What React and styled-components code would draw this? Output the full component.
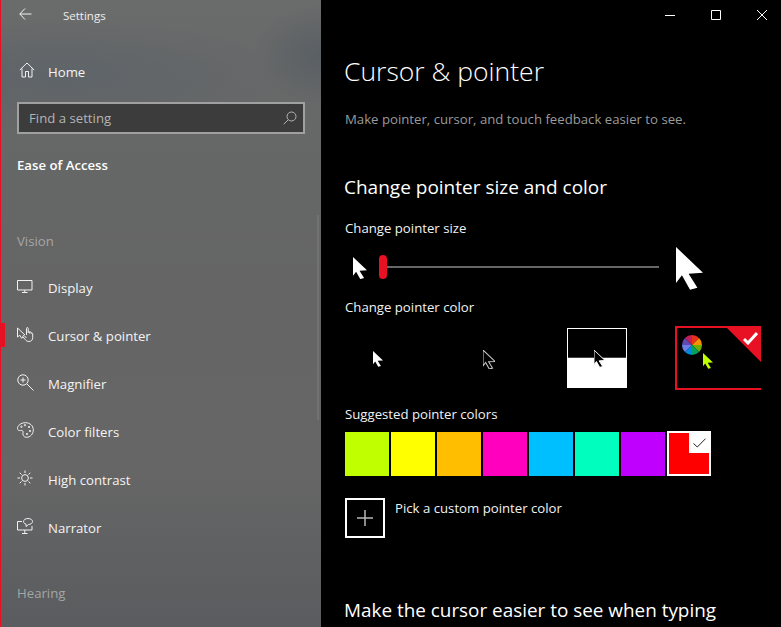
import React from "react";
import styled, { createGlobalStyle } from "styled-components";

const Global = createGlobalStyle`
  html, body { margin: 0; padding: 0; background: #000; }
  body { font-family: "Open Sans", "Noto Sans", "Liberation Sans", sans-serif; overflow: hidden; }
  * { box-sizing: border-box; }
`;

const Window = styled.div`
  width: 781px; height: 627px; display: flex; overflow: hidden; position: relative; background: #000;
`;
const Sidebar = styled.aside`
  width: 321px; height: 627px; flex: none; position: relative; overflow: hidden;
  border-left: 1px solid #e81123; color: #fff;
  background:
    radial-gradient(ellipse 70px 50px at 322px 55px, rgba(78,88,96,.6), rgba(78,88,96,0)),
    radial-gradient(ellipse 230px 55px at 60px 75px, rgba(86,96,104,.55), rgba(86,96,104,0)),
    linear-gradient(180deg, #6a6b6b 0, #666767 130px, #656565 300px, #666666 470px, #5a5c5f 627px);
`;
const Header = styled.div`
  height: 30px; display: flex; align-items: center; padding-left: 18px;
`;
const SettingsTitle = styled.span`
  font-size: 11.5px; margin-left: 31px; color: #eee;
`;
const NavRow = styled.div`
  height: 48px; display: flex; align-items: center; padding: 2px 0 0 ${p => p.$home ? 18 : 16}px; position: relative;
  font-size: 13.2px; color: #f4f4f4;
`;
const IconSlot = styled.span`
  width: ${p => p.$home ? 29 : 31}px; flex: none; display: flex; align-items: center; margin-top: -4px;
`;
const HomeWrap = styled.div`
  margin-top: 17px;
`;
const Search = styled.div`
  width: 288px; height: 32px; margin: 7px 0 0 16px; border: 2px solid #a0a0a0; background: #3c3c3c;
  display: flex; align-items: center; justify-content: space-between; padding: 0 6px 0 10px;
  font-size: 13.2px; color: #b4b4b4;
`;
const Section = styled.div`
  margin: ${p => p.$top}px 0 0 16px; font-size: 13.2px; line-height: 20px; height: 20px;
  color: ${p => p.$muted ? "#a5a5a5" : "#fff"}; font-weight: ${p => p.$bold ? 600 : 400};
`;
const NavList = styled.div`
  margin-top: 12px;
`;
const ActiveMark = styled.span`
  position: absolute; left: 0; top: 12px; width: 4px; height: 24px; background: #e81123;
`;
const Scroll = styled.span`
  position: absolute; left: 316px; top: 215px; width: 2px; height: 205px; background: #727272;
`;
const Main = styled.main`
  flex: 1; height: 627px; position: relative; color: #fff; overflow: hidden; padding-left: 23px;
`;
const Controls = styled.div`
  position: absolute; top: 0; right: -4px; display: flex;
`;
const Ctrl = styled.span`
  width: 46px; height: 30px; display: flex; align-items: center; justify-content: center;
`;
const Title = styled.h1`
  margin: 51px 0 0; font-size: 26.5px; line-height: 40px; font-weight: 300; height: 40px;
`;
const Desc = styled.p`
  margin: 18px 0 0 1px; font-size: 13.2px; line-height: 20px; color: #9a9a9a;
`;
const H2 = styled.h2`
  margin: ${p => p.$top}px 0 0; font-size: ${p => p.$size || 19}px; line-height: 28px; font-weight: 400;
`;
const Label = styled.div`
  margin: ${p => p.$top}px 0 0 1px; font-size: 13.2px; line-height: 20px; color: #f2f2f2;
`;
const SliderRow = styled.div`
  height: 44px; margin-top: 7px; display: flex; align-items: center; padding-left: 9px;
`;
const SmallCursor = styled.span`
  display: block; margin-top: 2px; width: 15px;
`;
const Thumb = styled.span`
  width: 8px; height: 24px; border-radius: 4px; background: #e81123; margin-left: 11px; flex: none;
`;
const Track = styled.span`
  width: 272px; height: 2px; background: #666; flex: none;
`;
const BigCursor = styled.span`
  margin: 4px 0 0 17px; display: block;
`;
const Cards = styled.div`
  width: 416px; height: 64px; margin: 9px 0 0 1px; display: flex; align-items: center; overflow: hidden;
`;
const PlainCard = styled.div`
  width: 60px; height: 60px; flex: none; margin-right: 51px; display: flex; align-items: flex-end; justify-content: center;
  padding: 0 0 ${p => p.$pb}px 6px;
`;
const SplitCard = styled.div`
  width: 60px; height: 60px; flex: none; margin-right: 48px; border: 1px solid #fff; border-bottom: 0;
  background: linear-gradient(180deg, #000 0, #000 28px, #444 28px, #444 29px, #fff 29px);
  display: flex; align-items: flex-end; justify-content: center; padding: 0 0 20px 4px;
`;
const CustomCard = styled.div`
  width: 90px; height: 64px; flex: none; border: 2px solid #e81123; position: relative;
`;
const Corner = styled.span`
  position: absolute; left: 48px; top: -2px; width: 38px; height: 38px; background: #e81123;
  clip-path: polygon(0 0, 100% 0, 100% 100%);
`;
const Wheel = styled.svg`
  position: absolute; left: 5px; top: 7px;
`;
const CursorSpot = styled.span`
  position: absolute; left: 26px; top: 25px;
`;
const CheckSpot = styled.span`
  position: absolute; left: 66px; top: 4px; display: flex;
`;
const Swatches = styled.div`
  display: flex; gap: 2px; margin: 7px 0 0 1px; align-items: flex-end;
`;
const Swatch = styled.span`
  width: 44px; height: 44px; background: ${p => p.$c};
`;
const PickedSwatch = styled.span`
  width: 44px; height: 45px; border: 2px solid #fff; background: #f00; position: relative;
`;
const PickedCorner = styled.span`
  position: absolute; right: 0; top: 0; width: 20px; height: 20px; background: #fff;
  display: flex; align-items: center; justify-content: center;
`;
const PickRow = styled.div`
  display: flex; gap: 10px; margin: 22px 0 0 1px;
`;
const PlusBox = styled.span`
  width: 40px; height: 40px; border: 2px solid #fff; display: flex; align-items: center; justify-content: center;
`;
const PickLabel = styled.span`
  font-size: 13.2px; line-height: 20px; color: #f2f2f2;
`;
const CursorSvg = styled.svg`
  flex: none; display: block;
`;
const BackArrow = styled.svg`
  margin-top: -2px;
`;

const stroke = { fill: "none", stroke: "#f2f2f2", strokeWidth: 1 };

const Cursor = ({ size = 12, fill = "#fff", line = "none" }) => (
  <CursorSvg width={size} height={size * 24 / 15} viewBox="0 0 15 24">
    <path d="M0 0 15 14.300 7 14.800 11.900 22.600 7.800 23.700 3.300 15.700 0 20Z" fill={fill} stroke={line} strokeWidth={line === "none" ? 0 : 1.3} />
  </CursorSvg>
);

const IconHome = () => (
  <svg width="16" height="16" viewBox="0 0 16 16" {...stroke}><path d="M.8 8 8 1l7.200 7M3 6.500V15h3.500V9.500h3V15H13V6.500" /></svg>
);
const IconDisplay = () => (
  <svg width="16" height="14" viewBox="0 0 16 14" {...stroke}><path d="M.5 1.500h14.500v9.500H.5ZM7.800 11v2.500M5 13.500h5.500" /></svg>
);
const IconCursorHand = () => (
  <svg width="17" height="15" viewBox="0 0 17 15" {...stroke}><path d="M.5 1v9l2.300-1.800 1.700 3 1.600-.9M.5 1 8 8" /><path d="M9.500 8V1.500c0-1.300 1.700-1.300 1.700 0V6m0-.8c0-1 1.500-1 1.500 0V6.500m0-.8c0-1 1.500-1 1.500 0v.8m0 0c0-.8 1.500-.8 1.500.4v3.600c0 2.500-1.500 4-3.800 4-1.700 0-2.900-.8-3.800-2.200L6 10c-.8-1 .5-2 1.400-1.200L9.500 11" /></svg>
);
const IconMagnifier = () => (
  <svg width="17" height="17" viewBox="0 0 17 17" {...stroke}><circle cx="6" cy="6" r="5.200" /><path d="M3.500 6h5M6 3.500v5M10 10l6.500 6.500" /></svg>
);
const IconPalette = () => (
  <svg width="17" height="16" viewBox="0 0 17 16" {...stroke}><path d="M8.500.7C4 .7.500 3.500.5 6.500c0 1.800 1.500 2.300 3 2 2-.4 3 .7 2.500 2.300-.5 1.800.5 4.500 3.500 4.500 4 0 6.800-3.500 6.800-7.500S13 .7 8.500.7Z" /><circle cx="4.500" cy="4.800" r=".7" /><circle cx="8" cy="3.200" r=".7" /><circle cx="12" cy="5" r=".7" /><circle cx="13" cy="9" r=".7" /><circle cx="10" cy="12" r=".7" /></svg>
);
const IconSun = () => (
  <svg width="16" height="16" viewBox="0 0 16 16" {...stroke}><circle cx="8" cy="8" r="3.400" /><path d="M8 .5v2.500M8 13v2.500M.5 8H3M13 8h2.500M2.700 2.700l1.800 1.800M11.500 11.500l1.800 1.800M2.700 13.300l1.800-1.800M11.500 4.500l1.800-1.800" /></svg>
);
const IconNarrator = () => (
  <svg width="16" height="16" viewBox="0 0 16 16" {...stroke}><path d="M5 3.500H.5v8.500h14.500V8M7.800 12v3M5 15.500h5.500" /><path d="M6.500 3.500C6.500 1.800 8.500.5 11 .5s4.500 1.300 4.500 3-2 3-4 3l-2.500 2V6.200C7.500 5.800 6.500 4.800 6.500 3.500Z" /></svg>
);

const NAV = [
  ["Display", <IconDisplay />],
  ["Cursor & pointer", <IconCursorHand />, true],
  ["Magnifier", <IconMagnifier />],
  ["Color filters", <IconPalette />],
  ["High contrast", <IconSun />],
  ["Narrator", <IconNarrator />],
];
const COLORS = ["#bfff00", "#ffff00", "#ffbf00", "#ff00bf", "#00bfff", "#00ffbf", "#bf00ff"];
const WHEEL = ["#e8301c", "#f59000", "#6fae00", "#00a060", "#0088e0", "#6a80e8", "#5f4bb0", "#c0205a"];

const ColorWheel = () => (
  <Wheel width="20" height="20" viewBox="-10 -10 20 20">
    {WHEEL.map((c, i) => {
      const a = (i * 45 - 90) * Math.PI / 180, b = ((i + 1) * 45 - 90) * Math.PI / 180;
      return <path key={c} fill={c} d={`M0 0L${10 * Math.cos(a)} ${10 * Math.sin(a)}A10 10 0 0 1 ${10 * Math.cos(b)} ${10 * Math.sin(b)}Z`} />;
    })}
  </Wheel>
);

export default function App() {
  return (
    <Window>
      <Global />
      <Sidebar>
        <Header>
          <BackArrow width="13" height="12" viewBox="0 0 13 12" {...stroke}><path d="M6 .5.800 6 6 11.500M.800 6H12.500" /></BackArrow>
          <SettingsTitle>Settings</SettingsTitle>
        </Header>
        <HomeWrap>
          <NavRow $home><IconSlot $home><IconHome /></IconSlot>Home</NavRow>
        </HomeWrap>
        <Search>
          Find a setting
          <svg width="14" height="14" viewBox="0 0 14 14" fill="none" stroke="#b4b4b4"><circle cx="8.500" cy="5.500" r="4.500" /><path d="M5.200 8.800.700 13.300" /></svg>
        </Search>
        <Section $top={21} $bold>Ease of Access</Section>
        <Section $top={56} $muted>Vision</Section>
        <NavList>
          {NAV.map(([label, icon, active]) => (
            <NavRow key={label}>
              {active && <ActiveMark />}
              <IconSlot>{icon}</IconSlot>{label}
            </NavRow>
          ))}
        </NavList>
        <Section $top={32} $muted>Hearing</Section>
        <Scroll />
      </Sidebar>
      <Main>
        <Controls>
          <Ctrl><svg width="10" height="10" viewBox="0 0 10 10"><path d="M0 5.500h10" stroke="#fff" /></svg></Ctrl>
          <Ctrl><svg width="10" height="10" viewBox="0 0 10 10"><path d="M.5.500h9v9h-9Z" stroke="#fff" fill="none" /></svg></Ctrl>
          <Ctrl><svg width="10" height="10" viewBox="0 0 10 10"><path d="M0 0l10 10M10 0 0 10" stroke="#fff" /></svg></Ctrl>
        </Controls>
        <Title>Cursor &amp; pointer</Title>
        <Desc>Make pointer, cursor, and touch feedback easier to see.</Desc>
        <H2 $top={44}>Change pointer size and color</H2>
        <Label $top={17}>Change pointer size</Label>
        <SliderRow>
          <SmallCursor><Cursor size={14} /></SmallCursor>
          <Thumb />
          <Track />
          <BigCursor><Cursor size={27} /></BigCursor>
        </SliderRow>
        <Label $top={8}>Change pointer color</Label>
        <Cards>
          <PlainCard $pb={21}><Cursor size={10} /></PlainCard>
          <PlainCard $pb={19}><Cursor size={12} fill="#000" line="#ccc" /></PlainCard>
          <SplitCard><Cursor size={11} fill="#000" line="#fff" /></SplitCard>
          <CustomCard>
            <ColorWheel />
            <CursorSpot><Cursor size={10} fill="#bfff00" /></CursorSpot>
            <Corner />
            <CheckSpot>
              <svg width="15" height="13" viewBox="0 0 15 13" fill="none" stroke="#fff" strokeWidth="3"><path d="M1 7 5 11 14 1" /></svg>
            </CheckSpot>
          </CustomCard>
        </Cards>
        <Label $top={14}>Suggested pointer colors</Label>
        <Swatches>
          {COLORS.map(c => <Swatch key={c} $c={c} />)}
          <PickedSwatch>
            <PickedCorner>
              <svg width="13" height="10" viewBox="0 0 13 10" fill="none" stroke="#222"><path d="M.5 5.500 4.300 9 12.500.700" /></svg>
            </PickedCorner>
          </PickedSwatch>
        </Swatches>
        <PickRow>
          <PlusBox><svg width="16" height="16" viewBox="0 0 16 16" stroke="#b8b8b8" strokeWidth="1.500"><path d="M8 0v16M0 8h16" /></svg></PlusBox>
          <PickLabel>Pick a custom pointer color</PickLabel>
        </PickRow>
        <H2 $top={58} $size={18.9}>Make the cursor easier to see when typing</H2>
      </Main>
    </Window>
  );
}
